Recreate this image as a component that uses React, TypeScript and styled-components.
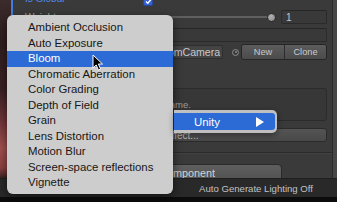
import React from "react";
import styled, { createGlobalStyle } from "styled-components";

const GlobalStyle = createGlobalStyle`
  html, body {
    margin: 0;
    padding: 0;
    background: #0c0c0c;
  }
  body {
    width: 337px;
    height: 202px;
    overflow: hidden;
    font-family: "Liberation Sans", Arial, sans-serif;
  }
`;

const Screen = styled.div`
  position: relative;
  width: 337px;
  height: 202px;
  display: grid;
  grid-template-rows: 178px 19px 5px;
  overflow: hidden;
  background: #0c0c0c;
`;

const Workspace = styled.div`
  display: grid;
  grid-template-columns: 11px 2px 1fr 1px 4px;
  min-height: 0;
`;

const SceneStrip = styled.div`
  background: linear-gradient(
    to bottom,
    #3b2b2b 0,
    #2f1e1f 40px,
    #3a2124 90px,
    #6a3336 118px,
    #a0504e 148px,
    #8c4040 168px,
    #3a2323 178px
  );
`;

const OverrideGutter = styled.div`
  background: linear-gradient(to bottom, #3f7ee0 0 17px, #3a3a3a 17px);
`;

const ScrollDivider = styled.div`
  background: #2b2b2b;
`;

const ScrollTrack = styled.div`
  background: #474747;
`;

const Inspector = styled.div`
  background: #3a3a3a;
  overflow: hidden;
  padding: 0 5px 0 12px;
  display: flex;
  flex-direction: column;
`;

const PropertyRow = styled.div<{ $h: number; $gap?: number }>`
  display: flex;
  align-items: center;
  flex-shrink: 0;
  height: ${({ $h }) => $h}px;
  margin-top: ${({ $gap }) => $gap ?? 0}px;
`;

const Label = styled.span<{ $override?: boolean }>`
  width: 118px;
  flex-shrink: 0;
  font-size: 10px;
  white-space: nowrap;
  color: ${({ $override }) => ($override ? "#4f88ee" : "#a6a6a6")};
  margin-bottom: ${({ $override }) => ($override ? "6px" : "0")};
`;

const Checkbox = styled.span`
  box-sizing: border-box;
  width: 10px;
  height: 10px;
  border-radius: 2px;
  background: #3462d2;
  border: 1px solid #26479c;
  display: flex;
  align-items: center;
  justify-content: center;
`;

const Slider = styled.div`
  flex: 1;
  display: flex;
  align-items: center;
  height: 14px;
  margin-right: 5px;
`;

const SliderTrack = styled.div`
  flex: 1;
  height: 2px;
  border-radius: 1px;
  background: #5f5f5f;
`;

const SliderKnob = styled.div`
  box-sizing: border-box;
  width: 9px;
  height: 9px;
  margin-left: -4px;
  border-radius: 50%;
  background: radial-gradient(circle at 40% 35%, #b0b0b0, #8a8a8a);
  border: 1px solid #2c2c2c;
`;

const TextField = styled.div<{ $w?: number }>`
  box-sizing: border-box;
  height: 14px;
  ${({ $w }) => ($w ? `width: ${$w}px;` : "flex: 1;")}
  display: flex;
  align-items: center;
  padding-left: 4px;
  background: #393939;
  border: 1px solid #2a2a2a;
  border-top-color: #262626;
  border-radius: 2px;
  font-size: 10px;
  color: #c4c4c4;
`;

const ObjectField = styled.div`
  box-sizing: border-box;
  width: 80px;
  height: 14px;
  display: flex;
  align-items: center;
  padding-left: 2px;
  background: #444444;
  border: 1px solid #2e2e2e;
  border-radius: 2px;
  font-size: 10.6px;
  color: #c8c8c8;
  white-space: nowrap;
  overflow: hidden;
`;

const PickerDot = styled.span`
  box-sizing: border-box;
  width: 7px;
  height: 7px;
  margin-left: 9px;
  border-radius: 50%;
  border: 1px solid #8c8c8c;
  display: flex;
  align-items: center;
  justify-content: center;

  &::after {
    content: "";
    width: 2px;
    height: 2px;
    border-radius: 50%;
    background: #8c8c8c;
  }
`;

const ButtonGroup = styled.div`
  margin-left: auto;
  display: flex;
  height: 16px;
  border: 1px solid #262626;
  border-radius: 3px;
  overflow: hidden;
  box-sizing: border-box;
`;

const GroupButton = styled.button`
  width: 42px;
  border: 0;
  padding: 0;
  font-family: inherit;
  font-size: 9.2px;
  color: #cacaca;
  background: linear-gradient(to bottom, #5c5c5c, #4b4b4b);

  & + & {
    border-left: 1px solid #2c2c2c;
  }
`;

const HelpBox = styled.div`
  box-sizing: border-box;
  height: 33px;
  margin-top: 28px;
  margin-left: -8px;
  flex-shrink: 0;
  display: flex;
  align-items: center;
  padding-left: 35px;
  background: #373737;
  border: 1px solid #2b2b2b;
  border-radius: 3px;
`;

const HelpText = styled.span`
  font-size: 9.5px;
  color: #9c9c9c;
  white-space: nowrap;
`;

const WideButton = styled.button`
  box-sizing: border-box;
  height: 14px;
  margin-top: 7px;
  margin-left: -8px;
  flex-shrink: 0;
  padding: 0;
  border: 1px solid #2b2b2b;
  border-radius: 3px;
  background: linear-gradient(to bottom, #545454, #494949);
  font-family: inherit;
  font-size: 10px;
  color: #bdbdbd;
  text-align: center;
`;

const Separator = styled.div`
  flex-shrink: 0;
  height: 1px;
  margin: 10px -5px 0 -12px;
  background: #2a2a2a;
  border-bottom: 1px solid #424242;
`;

const AddComponentButton = styled.button`
  box-sizing: border-box;
  align-self: center;
  width: 212px;
  height: 18px;
  margin-top: 10px;
  flex-shrink: 0;
  padding: 0;
  border: 1px solid #2a2a2a;
  border-radius: 4px;
  background: linear-gradient(to bottom, #5e5e5e, #525252);
  font-family: inherit;
  font-size: 10.8px;
  color: #d2d2d2;
`;

const StatusBar = styled.div`
  display: flex;
  align-items: center;
  justify-content: flex-end;
  padding-right: 24px;
  background: #292929;
  border-top: 1px solid #1f1f1f;
  font-size: 9.6px;
  color: #c2c2c2;
`;

const BottomEdge = styled.div`
  background: #0c0c0c;
`;

const PopupMenu = styled.ul`
  position: absolute;
  left: 7px;
  top: 15px;
  width: 166px;
  margin: 0;
  padding: 5px 0 3px;
  list-style: none;
  background: #cdcdcd;
  border-radius: 6px;
  box-shadow: 0 3px 10px rgba(0, 0, 0, 0.55);
  z-index: 10;
`;

const MenuItem = styled.li<{ $active?: boolean }>`
  height: 15.5px;
  line-height: 15.5px;
  padding-left: 21px;
  font-size: 11.4px;
  white-space: nowrap;
  color: ${({ $active }) => ($active ? "#ffffff" : "#161616")};
  background: ${({ $active }) => ($active ? "#2c6ad6" : "transparent")};
`;

const SubMenu = styled.div`
  position: absolute;
  left: 174px;
  top: 110px;
  width: 103px;
  box-sizing: border-box;
  padding: 3px 2px 3px 0;
  background: #c0c0c0;
  border-radius: 0 5px 5px 0;
  box-shadow: 0 2px 6px rgba(0, 0, 0, 0.4);
  z-index: 11;
`;

const SubMenuItem = styled.div`
  height: 17px;
  display: flex;
  align-items: center;
  padding: 0 11px 0 20px;
  background: #2c6ad6;
  border-radius: 0 3px 3px 0;
  font-size: 11.4px;
  color: #ffffff;
`;

const SubArrow = styled.span`
  margin-left: auto;
  width: 0;
  height: 0;
  border-top: 5px solid transparent;
  border-bottom: 5px solid transparent;
  border-left: 8px solid #ffffff;
`;

const Cursor = styled.svg`
  position: absolute;
  left: 92px;
  top: 54px;
  z-index: 12;
`;

const effects = [
  "Ambient Occlusion",
  "Auto Exposure",
  "Bloom",
  "Chromatic Aberration",
  "Color Grading",
  "Depth of Field",
  "Grain",
  "Lens Distortion",
  "Motion Blur",
  "Screen-space reflections",
  "Vignette",
];

export default function App() {
  return (
    <>
      <GlobalStyle />
      <Screen>
        <Workspace>
          <SceneStrip />
          <OverrideGutter />
          <Inspector>
            <PropertyRow $h={14} $gap={-6}>
              <Label $override>Is Global</Label>
              <Checkbox>
                <svg width="7" height="7" viewBox="0 0 7 7">
                  <path d="M1 3.6 L2.8 5.3 L6 1.4" fill="none" stroke="#fff" strokeWidth="1.4" />
                </svg>
              </Checkbox>
            </PropertyRow>
            <PropertyRow $h={14} $gap={2}>
              <Label>Weight</Label>
              <Slider>
                <SliderTrack />
                <SliderKnob />
              </Slider>
              <TextField $w={46}>1</TextField>
            </PropertyRow>
            <PropertyRow $h={13} $gap={4}>
              <Label>Priority</Label>
              <TextField>0</TextField>
            </PropertyRow>
            <PropertyRow $h={16} $gap={3}>
              <Label>Profile</Label>
              <ObjectField>CustomCamera</ObjectField>
              <PickerDot />
              <ButtonGroup>
                <GroupButton>New</GroupButton>
                <GroupButton>Clone</GroupButton>
              </ButtonGroup>
            </PropertyRow>
            <HelpBox>
              <HelpText>New assets use the same name.</HelpText>
            </HelpBox>
            <WideButton>Add effect...</WideButton>
            <Separator />
            <AddComponentButton>Add Component</AddComponentButton>
          </Inspector>
          <ScrollDivider />
          <ScrollTrack />
        </Workspace>
        <StatusBar>Auto Generate Lighting Off</StatusBar>
        <BottomEdge />

        <PopupMenu>
          {effects.map((name) => (
            <MenuItem key={name} $active={name === "Bloom"}>
              {name}
            </MenuItem>
          ))}
        </PopupMenu>
        <SubMenu>
          <SubMenuItem>
            Unity
            <SubArrow />
          </SubMenuItem>
        </SubMenu>
        <Cursor width="12" height="18" viewBox="0 0 12 18">
          <path
            d="M1 1 L1 14 L4.2 11 L6.4 16 L8.6 15 L6.4 10 L10.5 10 Z"
            fill="#000"
            stroke="#fff"
            strokeWidth="1"
            strokeLinejoin="round"
          />
        </Cursor>
      </Screen>
    </>
  );
}
